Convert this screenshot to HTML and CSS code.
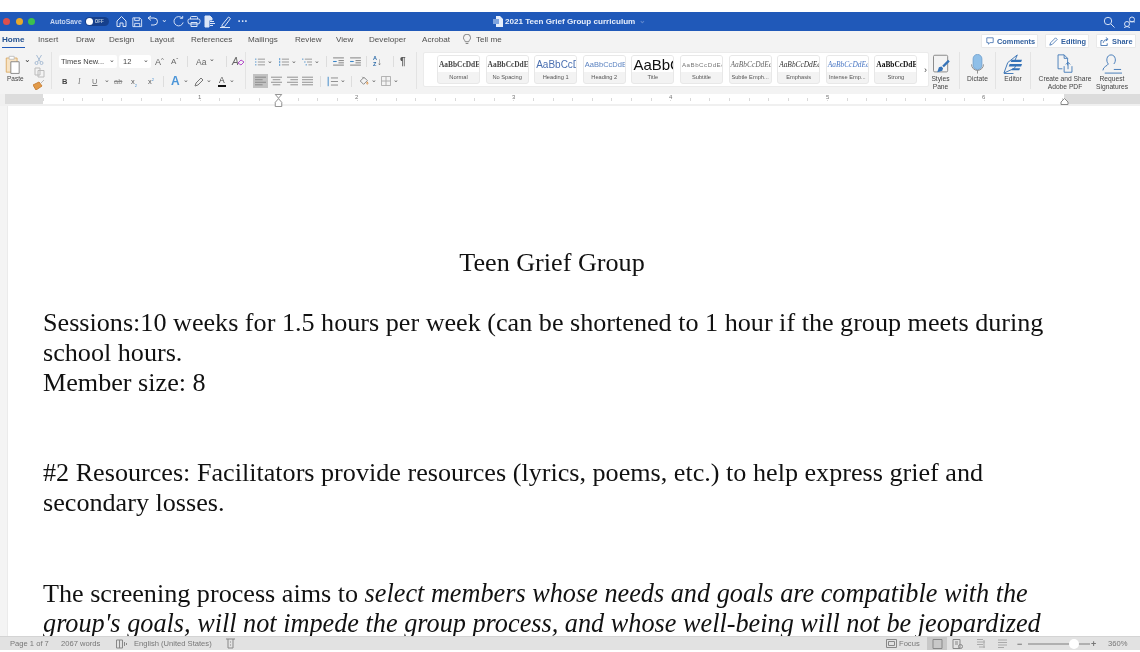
FILE: index.html
```html
<!DOCTYPE html>
<html lang="en">
<head>
<meta charset="utf-8">
<title>2021 Teen Grief Group curriculum</title>
<link rel="stylesheet" href="styles.css">
</head>
<body>
<div class="app">
  <header class="titlebar">
    <div class="lights"><i class="light red"></i><i class="light yellow"></i><i class="light green"></i></div>
    <span class="autosave">AutoSave</span>
    <span class="toggle"><i class="knob"></i><span>OFF</span></span>
    <div class="qat">
      <svg width="13" height="13" viewBox="0 0 13 13"><path d="M2 6 6.500 1.500 11 6v5.500H8V8H5v3.500H2z"/></svg>
      <svg width="12" height="12" viewBox="0 0 13 13"><path d="M2 2h7.500L11.500 4v7.500H2zM4 2v3h5V2M4 11.500V8h5.500v3.500"/></svg>
      <svg width="13" height="13" viewBox="0 0 13 13"><path d="M2 3h6a3.500 3.500 0 0 1 0 7H5M2 3l3-2M2 3l3 2.500"/></svg>
      <span class="caret-w">⌄</span>
      <svg width="13" height="13" viewBox="0 0 14 14"><path d="M11 3.500A5 5 0 1 0 12 8M8.500 3.500H11.500V1"/></svg>
      <svg width="14" height="13" viewBox="0 0 14 13"><path d="M3.500 4V2.500q0-1 1-1h5q1 0 1 1V4M2.500 4h9q1.500 0 1.500 1.500v1Q13 9 11 9H3Q1 9 1 6.500v-1Q1 4 2.500 4zM4 7.500h6v4H4z"/></svg>
      <svg width="13" height="13" viewBox="0 0 13 13"><path class="fill" d="M2 1h5l2 2v2H6v7H2z"/><path d="M7 6.500h4M7 8.500h5M7 10.500h3"/></svg>
      <svg width="13" height="13" viewBox="0 0 13 13"><path d="M3 10 9.500 2l2 1.500L5.500 11.500 3 12zM1 12.500h10"/></svg>
      <span class="dots">···</span>
    </div>
    <div class="doc-title"><svg width="10" height="11" viewBox="0 0 10 11"><path class="doc-ic" d="M3 0h4l3 3v8H3z"/><rect class="doc-ic2" x="0" y="3" width="6" height="5"/></svg><span>2021 Teen Grief Group curriculum</span><span class="title-caret">⌄</span></div>
    <div class="title-right">
      <svg width="12" height="12" viewBox="0 0 12 12"><circle cx="5" cy="5" r="3.700"/><path d="M8 8l3.500 3.500"/></svg>
      <svg width="13" height="12" viewBox="0 0 13 12"><circle cx="4" cy="8" r="2.500"/><circle cx="9" cy="3.500" r="2.500"/><path d="M1 11.500q3-2 6 0M6 6q3-1 6 0"/></svg>
    </div>
  </header>

  <nav class="tabs">
    <div class="tab-list">
      <span class="tab active">Home</span><span class="tab">Insert</span><span class="tab">Draw</span><span class="tab">Design</span><span class="tab">Layout</span><span class="tab">References</span><span class="tab">Mailings</span><span class="tab">Review</span><span class="tab">View</span><span class="tab">Developer</span><span class="tab">Acrobat</span>
    </div>
    <span class="tell"><svg width="8" height="11" viewBox="0 0 9 12"><path d="M2.500 8.500C2 6.500.5 6 .5 4a4 4 0 0 1 8 0c0 2-1.500 2.500-2 4.500zM3 10.500h3"/></svg>Tell me</span>
    <div class="tab-actions">
      <span class="pill comments"><svg width="8" height="8" viewBox="0 0 10 10"><path d="M1 1h8v6H5L3 9V7H1z"/></svg>Comments</span>
      <span class="pill editing"><svg width="9" height="9" viewBox="0 0 11 11"><path d="M1 10l1-3 6-6 2 2-6 6z"/></svg>Editing</span>
      <span class="pill share"><svg width="9" height="9" viewBox="0 0 10 10"><path d="M3 4H1v5.500h7V7M3.500 6.500Q4 3 8 2.500M6.500.5l2.500 2-2.500 2"/></svg>Share</span>
    </div>
  </nav>

  <section class="ribbon">
    <div class="group clip">
      <div class="paste">
        <svg width="20" height="21" viewBox="0 0 24 25"><path class="clipboard" d="M1.500 3.500h13v17h-13z"/><path class="clipclip" d="M5 1.500h6v3.500H5z"/><path class="paper" d="M7 8h10v14H7z"/></svg>
        <span class="caret">⌄</span>
        <small>Paste</small>
      </div>
      <div class="clip-tools">
        <svg width="10" height="10" viewBox="0 0 10 10"><path class="cut" d="M2.500 0 6.500 7M7.500 0 3.500 7"/><circle class="cut" cx="2.500" cy="8" r="1.500"/><circle class="cut" cx="7.500" cy="8" r="1.500"/></svg>
        <svg width="11" height="11" viewBox="0 0 11 11"><path class="copy" d="M1 1h5v7H1zM4 3.500h6V10H4z"/></svg>
        <svg width="12" height="10" viewBox="0 0 12 10"><path class="brush" d="M0 5l6-3 3 4-6 4z"/><path class="copy" d="M8 3l3-3"/></svg>
      </div>
    </div>

    <div class="group font">
      <div class="cells font-top">
        <span class="select font-name">Times New...<i>⌄</i></span>
        <span class="select font-size">12<i>⌄</i></span>
        <span class="glyph big">A<sup>^</sup></span><span class="glyph small">A<sup>ˇ</sup></span>
        <span class="sep"></span>
        <span class="glyph case">Aa<i>⌄</i></span>
        <span class="sep"></span>
        <span class="glyph clear">A<svg width="8" height="7" viewBox="0 0 8 7"><path d="M1 4l3-3 3 2-3 3z"/></svg></span>
      </div>
      <div class="cells font-bottom">
        <b class="f">B</b><em class="f">I</em><u class="f">U</u><i class="c">⌄</i><s class="f ab">ab</s>
        <span class="f">x<sub>2</sub></span><span class="f">x<sup>2</sup></span>
        <span class="sep"></span>
        <span class="fx">A</span><i class="c">⌄</i>
        <svg width="11" height="11" viewBox="0 0 11 11"><path class="pen" d="M1 10l1-3 5-5 2 2-5 5z"/></svg><i class="c">⌄</i>
        <span class="color-a">A</span><i class="c">⌄</i>
      </div>
    </div>

    <div class="group para">
      <div class="cells para-top">
        <svg class="li" width="10" height="10" viewBox="0 0 14 11"><path class="blue" d="M0 1.500h2M0 5.500h2M0 9.500h2"/><path d="M4 1.500h10M4 5.500h10M4 9.500h10"/></svg><i class="c">⌄</i>
        <svg class="li" width="10" height="10" viewBox="0 0 14 11"><path class="blue" d="M1 0v3M1 4v3M1 8v3"/><path d="M4 1.500h10M4 5.500h10M4 9.500h10"/></svg><i class="c">⌄</i>
        <svg class="li" width="10" height="10" viewBox="0 0 14 11"><path class="blue" d="M0 1.500h2M3 5.500h2M5 9.500h2"/><path d="M4 1.500h10M7 5.500h7M9 9.500h5"/></svg><i class="c">⌄</i>
        <span class="sep"></span>
        <svg class="li" width="11" height="9" viewBox="0 0 12 10"><path d="M0 1h12M6 4h6M6 6.500h6M0 9h12"/><path class="blue" d="M4 5H0"/></svg>
        <svg class="li" width="11" height="9" viewBox="0 0 12 10"><path d="M0 1h12M6 4h6M6 6.500h6M0 9h12"/><path class="blue" d="M0 5h4"/></svg>
        <span class="sep"></span>
        <span class="sort"><span>A<br>Z</span><b>↓</b></span>
        <span class="sep"></span>
        <span class="pilcrow">¶</span>
      </div>
      <div class="cells para-bottom">
        <span class="align on"><svg width="11" height="10" viewBox="0 0 13 10"><path d="M0 .5h13M0 3.500h9M0 6.500h13M0 9.500h9"/></svg></span>
        <span class="align"><svg width="11" height="10" viewBox="0 0 13 10"><path d="M0 .5h13M2 3.500h9M0 6.500h13M2 9.500h9"/></svg></span>
        <span class="align"><svg width="11" height="10" viewBox="0 0 13 10"><path d="M0 .5h13M4 3.500h9M0 6.500h13M4 9.500h9"/></svg></span>
        <span class="align"><svg width="11" height="10" viewBox="0 0 13 10"><path d="M0 .5h13M0 3.500h13M0 6.500h13M0 9.500h13"/></svg></span>
        <span class="sep"></span>
        <svg class="li" width="11" height="11" viewBox="0 0 14 12"><path class="blue" d="M1.500 0v12"/><path d="M5 1.500h9M5 6h9M5 10.500h9"/></svg><i class="c">⌄</i>
        <span class="sep"></span>
        <svg class="li" width="10" height="10" viewBox="0 0 12 12"><path d="M1.500 6 6 1.500 10 5.500 5.500 10zM4 1 6 3"/><path class="drop" d="M10 7q1.500 2 0 3-1.500-1 0-3z"/></svg><i class="c">⌄</i>
        <svg class="li light-li" width="10" height="10" viewBox="0 0 11 11"><path d="M.5.500h10v10H.5zM5.500.5v10M.5 5.500h10"/></svg><i class="c">⌄</i>
      </div>
    </div>

    <div class="gallery">
      <div class="style"><span class="pv pv-normal">AaBbCcDdEe</span><small>Normal</small></div>
      <div class="style"><span class="pv pv-normal">AaBbCcDdEe</span><small>No Spacing</small></div>
      <div class="style"><span class="pv pv-h1">AaBbCcDd</span><small>Heading 1</small></div>
      <div class="style"><span class="pv pv-h2">AaBbCcDdEe</span><small>Heading 2</small></div>
      <div class="style"><span class="pv pv-title">AaBbC</span><small>Title</small></div>
      <div class="style"><span class="pv pv-sub">AaBbCcDdEe</span><small>Subtitle</small></div>
      <div class="style"><span class="pv pv-em">AaBbCcDdEe</span><small>Subtle Emph...</small></div>
      <div class="style"><span class="pv pv-em dark">AaBbCcDdEe</span><small>Emphasis</small></div>
      <div class="style"><span class="pv pv-em blue-t">AaBbCcDdEe</span><small>Intense Emp...</small></div>
      <div class="style"><span class="pv pv-strong">AaBbCcDdEe</span><small>Strong</small></div>
      <span class="more">›</span>
    </div>

    <div class="big-btn styles-pane">
      <svg width="18" height="20" viewBox="0 0 21 24"><path class="frame" d="M3 1.500h14q1.500 0 1.500 1.500v17q0 1.500-1.500 1.500H3q-1.500 0-1.500-1.500V3Q1.500 1.500 3 1.500z"/><path class="bluefill" d="M6 22l2-6 3-1 2 2-1 3zM12 14l7-7 2 2-7 7z"/></svg>
      <small>Styles<br>Pane</small>
    </div>
    <div class="big-btn dictate">
      <svg width="13" height="20" viewBox="0 0 16 25"><rect class="mic" x="2.500" y=".5" width="11" height="19" rx="5.500"/><path class="frame" d="M.5 13a7.500 7.500 0 0 0 15 0M8 20.500v4"/></svg>
      <small>Dictate</small>
    </div>
    <div class="big-btn editor">
      <svg width="20" height="20" viewBox="0 0 21 21"><path class="frame-b" d="M1 20 5 9 15 1 12 8M1 20 12 15 14 11"/><path class="bluefill" d="M9 6h11l-1 2.500H8zM7 10.500h13l-1 2.500H6zM10 15h8l-1 2h-8z"/><path class="frame-b" d="M1 20.500h10"/></svg>
      <small>Editor</small>
    </div>
    <div class="big-btn adobe">
      <svg width="16" height="20" viewBox="0 0 18 23"><path class="frame-b" d="M1 1h7l4 4v8M6 17H1V1M8 1v4h4M8 14v7h9v-7M12.500 17.500V10M10 12l2.500-2.500L15 12"/></svg>
      <small>Create and Share<br>Adobe PDF</small>
    </div>
    <div class="big-btn sign">
      <svg width="20" height="20" viewBox="0 0 22 22"><path class="frame-b" d="M1 18c0-4 5-5 6-7-3-3-2-10 3-10s6 7 3 10M3 21h19M13 17h8"/></svg>
      <small>Request<br>Signatures</small>
    </div>
  </section>

  <div class="ruler">
    <div class="ruler-margin left"></div>
    <div class="ruler-track">
      <span class="num n1">1</span><span class="num n2">2</span><span class="num n3">3</span><span class="num n4">4</span><span class="num n5">5</span><span class="num n6">6</span>
      <svg class="indent" width="9" height="13" viewBox="0 0 9 14"><path d="M1 .5h7L4.500 4.500zM4.500 5 1 9v4.500h7V9z"/></svg>
      <svg class="indent-r" width="9" height="7" viewBox="0 0 9 7"><path d="M4.500 .5 8 4v2.500H1V4z"/></svg>
    </div>
    <div class="ruler-margin right"></div>
  </div>

  <main class="canvas">
    <article class="page">
      <p class="center">Teen Grief Group</p>
      <p class="sessions">Sessions:10 weeks for 1.5 hours per week (can be shortened to 1 hour if the group meets during school hours.<br>Member size: 8</p>
      <p class="resources">#2 Resources: Facilitators provide resources (lyrics, poems, etc.) to help express grief and secondary losses.</p>
      <p class="screening">The screening process aims to <em>select members whose needs and goals are compatible with the group's goals, will not impede the group process, and whose well-being will not be jeopardized</em></p>
    </article>
  </main>

  <footer class="status">
    <div class="status-left">
      <span>Page 1 of 7</span><span>2067 words</span>
      <svg width="11" height="10" viewBox="0 0 11 10"><path d="M.5 1h6v8h-6zM3.500 1v8M8.500 3v4M10.500 4v2"/></svg>
      <span>English (United States)</span>
      <svg width="11" height="11" viewBox="0 0 11 11"><path d="M1 1h9M3 1v9h5V1M5 4h1M5 7h1"/></svg>
    </div>
    <div class="status-right">
      <svg width="11" height="9" viewBox="0 0 11 9"><path d="M.5.500h10v8H.5zM2.500 2.500h6v4h-6z"/></svg>
      <span>Focus</span>
      <span class="view on"><svg width="11" height="10" viewBox="0 0 11 10"><path d="M1 .5h9v9H1z"/></svg></span>
      <span class="view"><svg width="11" height="10" viewBox="0 0 11 10"><path d="M1 .5h7v9H1zM3 3h3M3 5h3"/><circle cx="8.500" cy="7.500" r="2"/></svg></span>
      <span class="view faint"><svg width="11" height="10" viewBox="0 0 11 10"><path d="M1 .5h6M1 3h8M1 5.500h6M3 8h6M8 1v8"/></svg></span>
      <span class="view faint"><svg width="11" height="10" viewBox="0 0 11 10"><path d="M1 1h9M1 3.500h9M1 6h9M1 8.500h6"/></svg></span>
      <span class="zoom-btn">−</span>
      <span class="slider"><i class="thumb"></i></span>
      <span class="zoom-btn">+</span>
      <span>360%</span>
    </div>
  </footer>
</div>
</body>
</html>
```

FILE: styles.css
```css
* { box-sizing: border-box; }
html, body { margin: 0; padding: 0; height: 100%; overflow: hidden; background: #fff; }
body { font-family: "Liberation Sans", Arial, sans-serif; color: #3c3c3c; }
svg { display: block; flex: none; fill: none; stroke: #666; stroke-width: 1; }
i { font-style: normal; }
small { font-size: 6.5px; }

.app { height: 652px; display: flex; flex-direction: column; padding-top: 12px; padding-bottom: 2px; filter: blur(.4px); }

.titlebar { height: 19px; flex: none; background: #2059b9; display: flex; align-items: center; padding-left: 3px; position: relative; color: #fff; }
.lights { display: flex; gap: 5.5px; }
.light { width: 7px; height: 7px; border-radius: 50%; }
.red { background: #dd4f4b; }
.yellow { background: #e8a92c; }
.green { background: #3cc04e; }
.autosave { margin-left: 15px; font-size: 6.9px; font-weight: bold; color: #c9d8f2; }
.toggle { margin-left: 3px; width: 24px; height: 9px; border-radius: 5px; background: #153f8c; display: flex; align-items: center; font-size: 4.500px; color: #bcd; font-weight: bold; padding-left: 10px; position: relative; }
.knob { position: absolute; left: 1px; top: 1px; width: 7px; height: 7px; background: #fff; border-radius: 50%; }
.qat { margin-left: 5.500px; display: grid; grid-template-columns: 15px 16px 13.500px 12px 15.500px 15px 15.500px 17.500px 17px; justify-items: center; align-items: center; }
.qat svg { stroke: #dce6f7; }
.qat svg .fill { fill: #dce6f7; }
.caret-w { font-size: 8px; line-height: 8px; color: #dce6f7; margin-top: -4px; }
.dots { font-size: 10px; font-weight: bold; color: #dce6f7; }
.doc-title { position: absolute; left: 493px; top: 0; height: 19px; display: flex; align-items: center; gap: 2px; font-size: 8.100px; font-weight: bold; color: #e6eefb; }
.doc-ic { fill: #e6eefb; stroke: none; }
.doc-ic2 { fill: #7fa4de; stroke: none; }
.title-caret { color: #5f86cc; margin: -4px 0 0 2px; }
.title-right { margin-left: auto; padding-right: 4px; display: flex; gap: 8px; }
.title-right svg { stroke: #d5e1f5; }

.tabs { height: 20px; flex: none; background: #f3f3f3; display: flex; align-items: center; padding: 0 0 3px 2px; font-size: 8.100px; color: #505050; }
.tab-list { display: grid; grid-template-columns: 36px 38px 33px 41px 41px 57px 47px 41px 33px 53px 41px; justify-items: start; align-items: center; }
.tab { height: 16px; display: flex; align-items: center; white-space: nowrap; }
.tab.active { color: #22508f; font-weight: bold; border-bottom: 1.500px solid #2059b9; }
.tell { display: flex; align-items: center; gap: 5px; }
.tell svg { stroke: #777; }
.tab-actions { margin-left: auto; padding: 3px 4px 0 0; display: flex; gap: 7px; }
.pill { height: 14px; padding: 0 2px 0 4px; background: #fff; border: 1px solid #e9e9e9; display: flex; align-items: center; gap: 3px; font-weight: bold; color: #33619f; font-size: 7.400px; border-radius: 1px; white-space: nowrap; }
.pill svg { stroke: #3f6fae; }
.comments { width: 57px; }
.editing { width: 44px; padding-left: 3px; }
.share { width: 40px; padding-left: 3px; }

.ribbon { height: 43px; flex: none; background: #f3f3f3; display: flex; }
.group { display: flex; flex: none; border-right: 1px solid #e3e3e3; margin-top: 1px; height: 37px; padding-top: 3px; }
.clip { width: 52px; padding-left: 5px; }
.paste { position: relative; width: 28px; }
.paste small { position: absolute; left: 2px; top: 20px; color: #444; }
.paste .caret { position: absolute; left: 19px; top: 1px; font-size: 8px; line-height: 8px; }
.clipboard { fill: #f7e3c4; stroke: #d9a55c; }
.clipclip { fill: #fff; stroke: #bbb; }
.paper { fill: #fff; stroke: #777; }
.clip-tools { display: flex; flex-direction: column; align-items: center; gap: 2px; width: 12px; }
.cut { stroke: #a9bdd4; }
.copy { stroke: #bbb; }
.brush { fill: #e29a48; stroke: #c9823a; }

.cells { display: grid; align-items: center; justify-items: start; }
.font { width: 194px; flex-direction: column; gap: 6px; }
.font-top { height: 13px; padding-left: 7px; grid-template-columns: 58px 36px 14px 16px 10px 29px 10px 10px; }
.font-bottom { height: 14px; padding-left: 10px; grid-template-columns: 16px 14px 12px 10px 17px 17px 15px 8px 12px 11px 12px 12px 11px 8px; }
.select { height: 13px; background: #fff; border-radius: 2px; font-size: 7.500px; display: flex; align-items: center; justify-content: space-between; padding: 0 2px 0 2px; color: #444; white-space: nowrap; }
.select i { font-size: 7px; margin-top: -3px; }
.font-name { width: 58px; }
.font-size { width: 32px; margin-left: 2px; padding-left: 4px; }
.glyph { font-size: 9px; color: #666; display: flex; }
.glyph sup { font-size: 6px; line-height: 1; }
.big { margin-left: 2px; }
.small { font-size: 8px; margin-left: 4px; }
.sep { width: 1px; height: 11px; background: #ddd; }
.font-top .sep { margin-left: 4px; }
.case { font-size: 8.500px; gap: 3px; margin-left: 3px; }
.case i { font-size: 7px; margin-top: -2px; color: #444; }
.clear { font-style: italic; font-size: 10px; }
.clear svg { stroke: #b34ec9; margin-left: -2px; margin-top: 3px; }
.f { font-size: 7.500px; color: #555; }
.f sup, .f sub { font-size: 4px; line-height: 0; color: #4a90d0; }
b.f { color: #444; }
em.f { font-family: "Liberation Serif", serif; color: #777; }
u.f { color: #777; }
.ab { color: #888; }
.c { font-size: 7px; line-height: 7px; margin-top: -3px; color: #555; }
.fx { font-size: 12px; font-weight: bold; color: #4b95d8; }
.pen { stroke: #777; fill: #eee; }
.color-a { border-bottom: 2px solid #111; font-size: 8.500px; line-height: 9px; padding: 0 1px; color: #444; }

.para { width: 171px; flex-direction: column; gap: 6px; }
.para-top { height: 13px; padding-left: 9px; grid-template-columns: 12px 12px 12px 11px 12px 12px 7px 17px 16px 7px 20px 7px 8px; }
.para-bottom { height: 14px; padding-left: 7px; grid-template-columns: 15.500px 16px 15px 20.500px 7px 13px 11px 8px 12px 10px 12px 8px; }
.li { stroke: #777; }
.light-li { stroke: #aaa; }
.li .blue { stroke: #3a86c8; stroke-width: 1.200; }
.li .drop { stroke: #d98a3a; }
.sort { display: flex; font-size: 5.500px; line-height: 5.500px; font-weight: bold; color: #2b6aa8; align-items: center; }
.sort b { font-size: 10px; color: #666; }
.pilcrow { font-size: 10px; font-weight: bold; color: #555; }
.align { width: 15px; height: 14px; display: flex; align-items: center; justify-content: center; }
.align.on { background: #c2c2c2; }
.align svg { stroke: #808080; }

.gallery { margin: 1px 0 0 6px; width: 506px; height: 35px; background: #fff; border: 1px solid #ebebeb; display: flex; align-items: center; gap: 5.600px; padding-left: 13px; flex: none; border-radius: 2px; }
.style { width: 43px; height: 29px; flex: none; background: #f3f3f3; border: 1px solid #e8e8e8; border-radius: 3px; display: flex; flex-direction: column; align-items: center; overflow: hidden; }
.style small { height: 11px; font-size: 5.700px; line-height: 10px; color: #555; white-space: nowrap; }
.pv { width: 100%; height: 17px; background: #fff; display: flex; align-items: center; padding-left: 1px; overflow: hidden; white-space: nowrap; color: #222; }
.pv-normal { font-family: "Liberation Serif", serif; font-size: 7.400px; font-weight: bold; color: #444; }
.pv-h1 { font-size: 10px; color: #4a6fb0; }
.pv-h2 { font-size: 7.500px; color: #5a82c0; }
.pv-title { font-size: 15px; color: #111; }
.pv-sub { font-size: 6.200px; letter-spacing: .5px; color: #777; }
.pv-em { font-family: "Liberation Serif", serif; font-style: italic; font-size: 7.400px; color: #666; }
.pv-em.dark { color: #333; }
.pv-em.blue-t { color: #4b78c4; }
.pv-strong { font-family: "Liberation Serif", serif; font-weight: bold; font-size: 7.400px; color: #111; }
.more { font-size: 9px; margin-left: 1px; color: #444; }

.big-btn { display: flex; flex-direction: column; align-items: center; text-align: center; flex: none; border-right: 1px solid #e3e3e3; height: 37px; margin-top: 1px; padding-top: 2px; }
.big-btn small { line-height: 7.500px; color: #444; margin-top: 0; padding-top: 1px; font-size: 6.700px; white-space: nowrap; }
.frame { stroke: #777; }
.frame-b { stroke: #3b74b5; }
.mic { fill: #8fbfe8; stroke: #6a9ccc; }
.bluefill { fill: #3573b8; stroke: none; }
.styles-pane { width: 31px; padding-right: 7px; }
.dictate { width: 36px; }
.editor { width: 35px; }
.adobe { width: 62px; border: 0; margin-left: 3px; }
.sign { width: 32px; border: 0; }

.ruler { height: 12px; flex: none; background: #f0f0f0; display: flex; padding-left: 5px; }
.ruler-margin { background: #dcdcdc; height: 10px; flex: none; }
.left { width: 38px; }
.right { flex: 1; }
.ruler-track { width: 1021px; height: 10px; background: #fff; flex: none; position: relative; background-image: repeating-linear-gradient(90deg, #d8d8d8 0 1px, transparent 1px 19.600px); background-size: 100% 3px; background-position: 0 4px; background-repeat: no-repeat; }
.num { position: absolute; top: 0; font-size: 6px; color: #777; background: #fff; }
.n1 { left: 155px; } .n2 { left: 312px; } .n3 { left: 469px; } .n4 { left: 626px; } .n5 { left: 783px; } .n6 { left: 939px; }
.indent { position: absolute; left: 231px; top: 0; stroke: #888; fill: #fff; }
.indent-r { position: absolute; left: 1017px; top: 4px; stroke: #888; fill: #fff; }

.canvas { flex: 1; min-height: 0; overflow: hidden; background: #f4f4f4; padding-left: 7px; }
.page { height: 100%; background: #fff; border-left: 1px solid #ebebeb; overflow: hidden; padding: 142px 90px 0 35px; font-family: "Liberation Serif", "Times New Roman", serif; font-size: 26.150px; line-height: 30px; color: #111; }
.page p { margin: 0; }
.page em { font-size: 26.250px; }
.center { text-align: center; padding-left: 11px; }
.sessions { margin-top: 30px !important; }
.resources { margin-top: 60px !important; }
.screening { margin-top: 61px !important; }

.status { height: 14px; flex: none; background: #e2e2e2; display: flex; justify-content: space-between; font-size: 7.600px; color: #777; padding-left: 10px; border-top: 1px solid #d4d4d4; }
.status svg { stroke: #888; }
.status-left { display: grid; grid-template-columns: 51px 55px 18px 91px 11px; align-items: center; white-space: nowrap; }
.status-right { display: grid; grid-template-columns: 13px 28px 20px 24px 21px 25px 11px 63px 17px 32px; align-items: center; height: 100%; white-space: nowrap; }
.view { width: 20px; height: 100%; display: flex; align-items: center; justify-content: center; }
.view.on { background: #c8c8c8; }
.view.faint svg { stroke: #aaa; }
.zoom-btn { font-size: 9px; font-weight: bold; }
.slider { width: 62px; height: 2px; background: #b0b0b0; position: relative; }
.thumb { position: absolute; left: 41px; top: -4px; width: 10px; height: 10px; background: #fff; border-radius: 50%; }
```
